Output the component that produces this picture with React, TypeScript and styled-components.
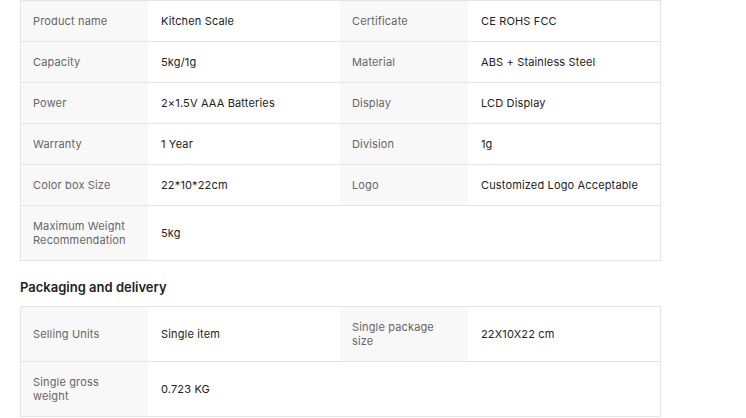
import React from "react";
import styled, { createGlobalStyle } from "styled-components";

const Global = createGlobalStyle`
  html, body { margin: 0; padding: 0; background: #ffffff; }
  body { font-family: Inter, "Noto Sans", Roboto, sans-serif; }
`;

const Page = styled.div`
  padding: 0 0 0 20px;
  width: 641px;
`;

const Table = styled.div`
  width: 641px;
  box-sizing: border-box;
  border: 1px solid #e4e4e4;
  display: flex;
  flex-direction: column;
`;

const Row = styled.div`
  display: grid;
  grid-template-columns: 127px 192px 128px 192px;
  border-bottom: 1px solid #e4e4e4;
  &:last-child { border-bottom: 0; }
`;

const Label = styled.div`
  background: #f8f8f8;
  color: #666666;
  font-size: 11px;
  line-height: 14px;
  letter-spacing: 0.15px;
  padding: 13px 18px 13px 12px;
  display: flex;
  align-items: center;
`;

const Value = styled.div`
  background: #ffffff;
  color: #222222;
  font-size: 11px;
  line-height: 14px;
  letter-spacing: 0.15px;
  padding: 13px 12px 13px 13px;
  display: flex;
  align-items: center;
`;

const Heading = styled.h3`
  margin: 17px 0 10px 0;
  font-size: 13px;
  line-height: 18px;
  font-weight: 600;
  color: #222222;
`;

type Cell = [string, string];

const specs: [Cell, Cell | null][] = [
  [["Product name", "Kitchen Scale"], ["Certificate", "CE ROHS FCC"]],
  [["Capacity", "5kg/1g"], ["Material", "ABS + Stainless Steel"]],
  [["Power", "2×1.5V AAA Batteries"], ["Display", "LCD Display"]],
  [["Warranty", "1 Year"], ["Division", "1g"]],
  [["Color box Size", "22*10*22cm"], ["Logo", "Customized Logo Acceptable"]],
  [["Maximum Weight Recommendation", "5kg"], null],
];

const packaging: [Cell, Cell | null][] = [
  [["Selling Units", "Single item"], ["Single package size", "22X10X22 cm"]],
  [["Single gross weight", "0.723 KG"], null],
];

const SpecRows = ({ rows }: { rows: [Cell, Cell | null][] }) => (
  <>
    {rows.map(([a, b], i) => (
      <Row key={i}>
        <Label>{a[0]}</Label>
        <Value>{a[1]}</Value>
        {b ? <Label>{b[0]}</Label> : <Value />}
        {b ? <Value>{b[1]}</Value> : <Value />}
      </Row>
    ))}
  </>
);

export default function App() {
  return (
    <Page>
      <Global />
      <Table>
        <SpecRows rows={specs} />
      </Table>
      <Heading>Packaging and delivery</Heading>
      <Table>
        <SpecRows rows={packaging} />
      </Table>
    </Page>
  );
}
